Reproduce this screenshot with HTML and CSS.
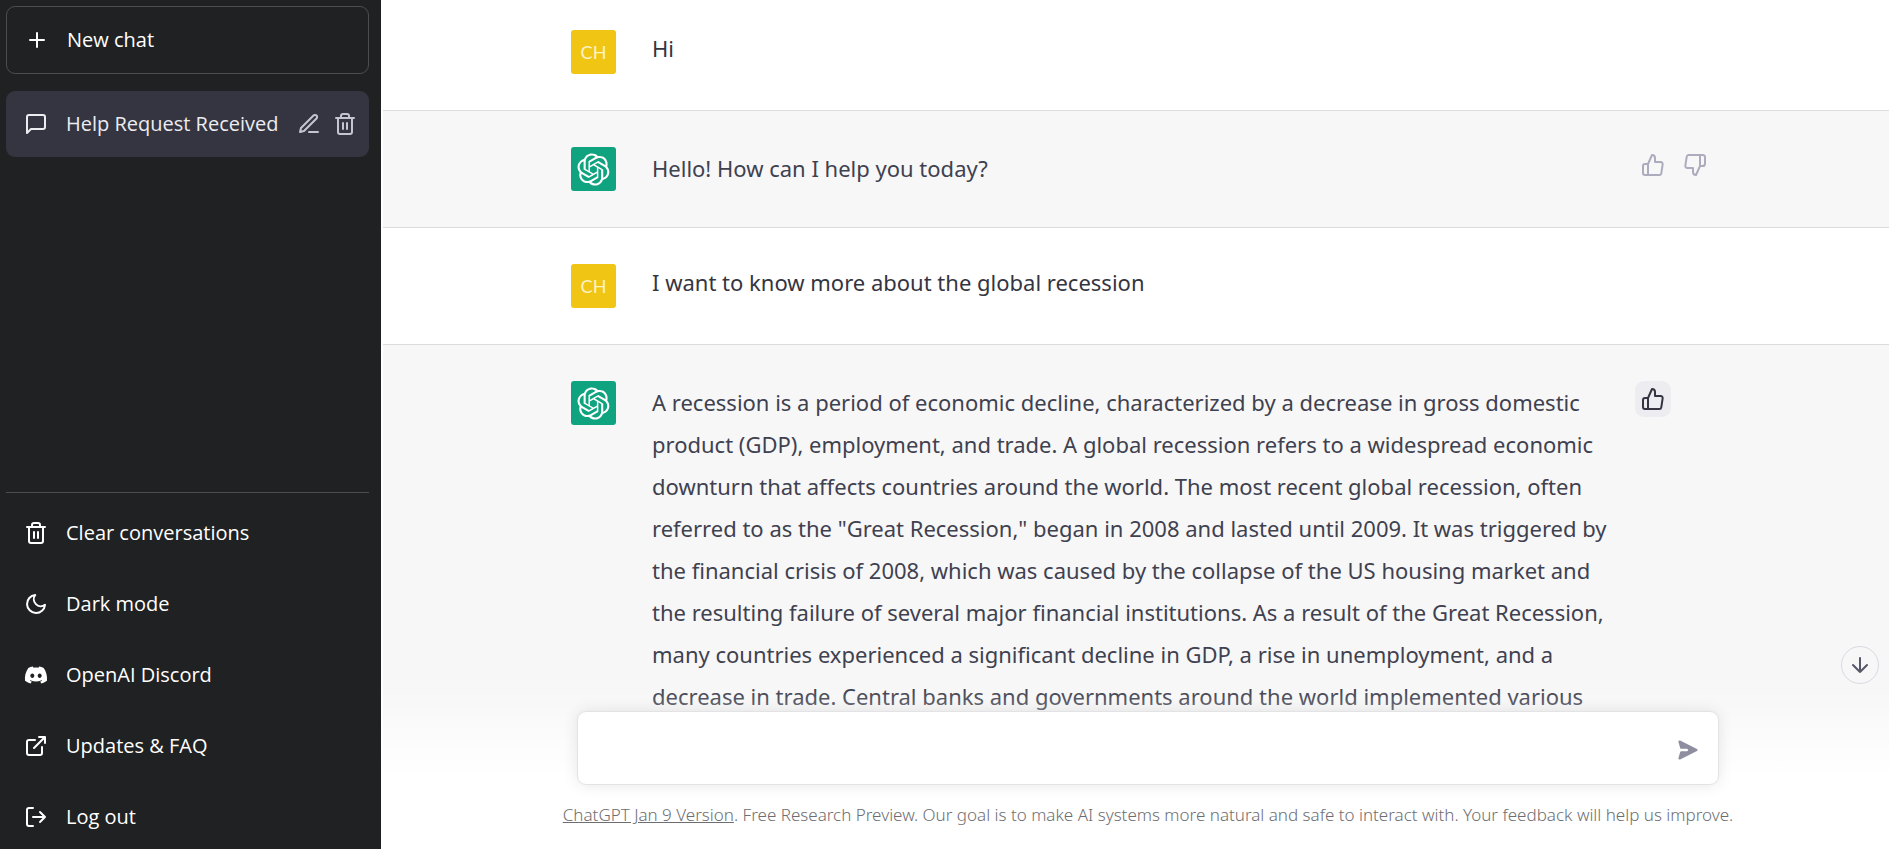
FILE: index.html
```html
<!DOCTYPE html>
<html lang="en">
<head>
    <meta charset="UTF-8">
    <meta name="viewport" content="width=device-width, initial-scale=1">
    <title>Help Request Received</title>
    <link rel="stylesheet" href="styles.css">
</head>
<body>
    <!-- shared icons -->
    <svg class="icon_defs" aria-hidden="true">
        <symbol id="icon-trash" viewBox="0 0 24 24">
            <path d="M3 6h18M19 6v14a2 2 0 0 1-2 2H7a2 2 0 0 1-2-2V6m3 0V4a2 2 0 0 1 2-2h4a2 2 0 0 1 2 2v2M10 11v6M14 11v6"/>
        </symbol>
        <symbol id="icon-thumb-up" viewBox="0 0 24 24">
            <path d="M14 9V5a3 3 0 0 0-3-3l-4 9v11h11.28a2 2 0 0 0 2-1.7l1.38-9a2 2 0 0 0-2-2.3zM7 22H4a2 2 0 0 1-2-2v-7a2 2 0 0 1 2-2h3"/>
        </symbol>
        <symbol id="icon-thumb-down" viewBox="0 0 24 24">
            <path d="M10 15v4a3 3 0 0 0 3 3l4-9V2H5.72a2 2 0 0 0-2 1.7l-1.38 9a2 2 0 0 0 2 2.3zm7-13h2.67A2.31 2.31 0 0 1 22 4v7a2.31 2.31 0 0 1-2.33 2H17"/>
        </symbol>
        <symbol id="icon-openai" viewBox="0 0 41 41">
            <path d="M37.5324 16.8707C37.9808 15.5241 38.1363 14.0974 37.9886 12.6859C37.8409 11.2744 37.3934 9.91076 36.676 8.68622C35.6126 6.83404 33.9882 5.3676 32.0373 4.4985C30.0864 3.62941 27.9098 3.40259 25.8215 3.85078C24.8796 2.7893 23.7219 1.94125 22.4257 1.36341C21.1295 0.785575 19.7249 0.491269 18.3058 0.500197C16.1708 0.495044 14.0893 1.16803 12.3614 2.42214C10.6335 3.67624 9.34853 5.44666 8.6917 7.47815C7.30085 7.76286 5.98686 8.3414 4.8377 9.17505C3.68854 10.0087 2.73073 11.0782 2.02839 12.312C0.956464 14.1591 0.498905 16.2988 0.721698 18.4228C0.944492 20.5467 1.83612 22.5449 3.268 24.1293C2.81966 25.4759 2.66413 26.9026 2.81182 28.3141C2.95951 29.7256 3.40701 31.0892 4.12437 32.3138C5.18791 34.1659 6.8123 35.6322 8.76321 36.5013C10.7141 37.3704 12.8907 37.5973 14.9789 37.1492C15.9208 38.2107 17.0786 39.0587 18.3747 39.6366C19.6709 40.2144 21.0755 40.5087 22.4946 40.4998C24.6307 40.5054 26.7133 39.8321 28.4418 38.5772C30.1704 37.3223 31.4556 35.5506 32.1119 33.5179C33.5027 33.2332 34.8167 32.6547 35.9659 31.821C37.115 30.9874 38.0728 29.9178 38.7752 28.684C39.8458 26.8371 40.3023 24.6979 40.0789 22.5748C39.8556 20.4517 38.9639 18.4544 37.5324 16.8707ZM22.4978 37.8849C20.7443 37.8874 19.0459 37.2733 17.6994 36.1501C17.7601 36.117 17.8666 36.0586 17.936 36.0161L25.9004 31.4156C26.1003 31.3019 26.2663 31.137 26.3813 30.9378C26.4964 30.7386 26.5563 30.5124 26.5549 30.2825V19.0542L29.9213 20.998C29.9389 21.0068 29.9541 21.0198 29.9656 21.0359C29.977 21.052 29.9842 21.0707 29.9867 21.0902V30.3889C29.9842 32.375 29.1946 34.2791 27.7909 35.6841C26.3872 37.0892 24.4838 37.8806 22.4978 37.8849ZM6.39227 31.0064C5.51397 29.4888 5.19742 27.7107 5.49804 25.9832C5.55718 26.0187 5.66048 26.0818 5.73461 26.1244L13.699 30.7248C13.8975 30.8408 14.1233 30.902 14.3532 30.902C14.583 30.902 14.8088 30.8408 15.0073 30.7248L24.731 25.1103V28.9979C24.7321 29.0177 24.7283 29.0376 24.7199 29.0556C24.7115 29.0736 24.6988 29.0893 24.6829 29.1012L16.6317 33.7497C14.9096 34.7416 12.8643 35.0097 10.9447 34.4954C9.02506 33.9811 7.38785 32.7263 6.39227 31.0064ZM4.29707 13.6194C5.17156 12.0998 6.55279 10.9364 8.19885 10.3327C8.19885 10.4013 8.19491 10.5228 8.19491 10.6071V19.808C8.19351 20.0378 8.25334 20.2638 8.36823 20.4629C8.48312 20.6619 8.64893 20.8267 8.84863 20.9404L18.5723 26.5542L15.206 28.4979C15.1894 28.5089 15.1703 28.5155 15.1505 28.5173C15.1307 28.5191 15.1107 28.516 15.0924 28.5082L7.04046 23.8557C5.32135 22.8601 4.06716 21.2235 3.55289 19.3046C3.03862 17.3858 3.30624 15.3413 4.29707 13.6194ZM31.955 20.0556L22.2312 14.4411L25.5976 12.4981C25.6142 12.4872 25.6333 12.4805 25.6531 12.4787C25.6729 12.4769 25.6928 12.4801 25.7111 12.4879L33.7631 17.1364C34.9967 17.849 36.0017 18.8982 36.6606 20.1613C37.3194 21.4244 37.6047 22.849 37.4832 24.2684C37.3617 25.6878 36.8382 27.0432 35.9743 28.1759C35.1103 29.3086 33.9415 30.1717 32.6047 30.6641C32.6047 30.5947 32.6047 30.4733 32.6047 30.3889V21.188C32.6066 20.9586 32.5474 20.7328 32.4332 20.5338C32.319 20.3348 32.154 20.1698 31.955 20.0556ZM35.3055 15.0128C35.2464 14.9765 35.1431 14.9142 35.069 14.8717L27.1045 10.2712C26.906 10.1554 26.6803 10.0943 26.4504 10.0943C26.2206 10.0943 25.9948 10.1554 25.7963 10.2712L16.0726 15.8858V11.9982C16.0715 11.9783 16.0753 11.9585 16.0837 11.9405C16.0921 11.9225 16.1048 11.9068 16.1207 11.8949L24.1719 7.25025C25.4053 6.53903 26.8158 6.19376 28.2383 6.25482C29.6608 6.31589 31.0364 6.78077 32.2044 7.59508C33.3723 8.40939 34.2842 9.53945 34.8334 10.8531C35.3826 12.1667 35.5464 13.6095 35.3055 15.0128ZM14.2424 21.9419L10.8752 19.9981C10.8576 19.9893 10.8423 19.9763 10.8309 19.9602C10.8195 19.9441 10.8122 19.9254 10.8098 19.9058V10.6071C10.8107 9.18295 11.2173 7.78848 11.9819 6.58696C12.7466 5.38544 13.8377 4.42659 15.1275 3.82264C16.4173 3.21869 17.8524 2.99464 19.2649 3.1767C20.6775 3.35876 22.0089 3.93941 23.1034 4.85067C23.0427 4.88379 22.937 4.94215 22.8668 4.98473L14.9024 9.58517C14.7025 9.69878 14.5366 9.86356 14.4215 10.0626C14.3065 10.2616 14.2466 10.4877 14.2479 10.7175L14.2424 21.9419ZM16.071 17.9991L20.4018 15.4978L24.7325 17.9975V22.9985L20.4018 25.4983L16.071 22.9985V17.9991Z"/>
        </symbol>
    </svg>

    <div class="app">
        <aside class="sidebar">
            <button type="button" class="new_chat">
                <svg class="icon" viewBox="0 0 24 24"><path d="M12 5v14M5 12h14"/></svg>
                <span>New chat</span>
            </button>
            <div class="chat_item">
                <a class="chat_link" href="#">
                    <svg class="icon" viewBox="0 0 24 24"><path d="M21 15a2 2 0 0 1-2 2H7l-4 4V5a2 2 0 0 1 2-2h14a2 2 0 0 1 2 2z"/></svg>
                    <span>Help Request Received</span>
                </a>
                <button type="button" class="chat_action" aria-label="Rename">
                    <svg class="icon" viewBox="0 0 24 24"><path d="M12 20h9M16.5 3.5a2.121 2.121 0 0 1 3 3L7 19l-4 1 1-4L16.5 3.5z"/></svg>
                </button>
                <button type="button" class="chat_action" aria-label="Delete">
                    <svg class="icon"><use href="#icon-trash"/></svg>
                </button>
            </div>
            <nav class="menu">
                <a href="#">
                    <svg class="icon"><use href="#icon-trash"/></svg>
                    <span>Clear conversations</span>
                </a>
                <a href="#">
                    <svg class="icon" viewBox="0 0 24 24"><path d="M21 12.79A9 9 0 1 1 11.21 3 7 7 0 0 0 21 12.79z"/></svg>
                    <span>Dark mode</span>
                </a>
                <a href="#">
                    <svg class="icon icon_fill" viewBox="-1 -1 26 26"><path d="M20.317 4.3698a19.7913 19.7913 0 00-4.8851-1.5152.0741.0741 0 00-.0785.0371c-.211.3753-.4447.8648-.6083 1.2495-1.8447-.2762-3.68-.2762-5.4868 0-.1636-.3933-.4058-.8742-.6177-1.2495a.077.077 0 00-.0785-.037 19.7363 19.7363 0 00-4.8852 1.515.0699.0699 0 00-.0321.0277C.5334 9.0458-.319 13.5799.0992 18.0578a.0824.0824 0 00.0312.0561c2.0528 1.5076 4.0413 2.4228 5.9929 3.0294a.0777.0777 0 00.0842-.0276c.4616-.6304.8731-1.2952 1.226-1.9942a.076.076 0 00-.0416-.1057c-.6528-.2476-1.2743-.5495-1.8722-.8923a.077.077 0 01-.0076-.1277c.1258-.0943.2517-.1923.3718-.2914a.0743.0743 0 01.0776-.0105c3.9278 1.7933 8.18 1.7933 12.0614 0a.0739.0739 0 01.0785.0095c.1202.099.246.1981.3728.2924a.077.077 0 01-.0066.1276 12.2986 12.2986 0 01-1.873.8914.0766.0766 0 00-.0407.1067c.3604.698.7719 1.3628 1.225 1.9932a.076.076 0 00.0842.0286c1.961-.6067 3.9495-1.5219 6.0023-3.0294a.077.077 0 00.0313-.0552c.5004-5.177-.8382-9.6739-3.5485-13.6604a.061.061 0 00-.0312-.0286zM8.02 15.3312c-1.1825 0-2.1569-1.0857-2.1569-2.419 0-1.3332.9555-2.4189 2.157-2.4189 1.2108 0 2.1757 1.0952 2.1568 2.419 0 1.3332-.9555 2.4189-2.1569 2.4189zm7.9748 0c-1.1825 0-2.1569-1.0857-2.1569-2.419 0-1.3332.9554-2.4189 2.1569-2.4189 1.2108 0 2.1757 1.0952 2.1568 2.419 0 1.3332-.946 2.4189-2.1568 2.4189Z"/></svg>
                    <span>OpenAI Discord</span>
                </a>
                <a href="#">
                    <svg class="icon" viewBox="0 0 24 24"><path d="M18 13v6a2 2 0 0 1-2 2H5a2 2 0 0 1-2-2V8a2 2 0 0 1 2-2h6M15 3h6v6M10 14L21 3"/></svg>
                    <span>Updates &amp; FAQ</span>
                </a>
                <a href="#">
                    <svg class="icon" viewBox="0 0 24 24"><path d="M9 21H5a2 2 0 0 1-2-2V5a2 2 0 0 1 2-2h4M16 17l5-5-5-5M21 12H9"/></svg>
                    <span>Log out</span>
                </a>
            </nav>
        </aside>

        <main class="main">
            <div class="messages">
                <div class="message user">
                    <div class="message_inner">
                        <div class="avatar">CH</div>
                        <p class="text">Hi</p>
                    </div>
                </div>
                <div class="message bot">
                    <div class="message_inner">
                        <div class="avatar"><svg class="logo"><use href="#icon-openai"/></svg></div>
                        <p class="text">Hello! How can I help you today?</p>
                        <div class="feedback">
                            <button type="button" aria-label="Good answer"><svg class="icon"><use href="#icon-thumb-up"/></svg></button>
                            <button type="button" aria-label="Bad answer"><svg class="icon"><use href="#icon-thumb-down"/></svg></button>
                        </div>
                    </div>
                </div>
                <div class="message user">
                    <div class="message_inner">
                        <div class="avatar">CH</div>
                        <p class="text">I want to know more about the global recession</p>
                    </div>
                </div>
                <div class="message bot">
                    <div class="message_inner">
                        <div class="avatar"><svg class="logo"><use href="#icon-openai"/></svg></div>
                        <p class="text">A recession is a period of economic decline, characterized by a decrease in gross domestic product (GDP), employment, and trade. A global recession refers to a widespread economic downturn that affects countries around the world. The most recent global recession, often referred to as the "Great Recession," began in 2008 and lasted until 2009. It was triggered by the financial crisis of 2008, which was caused by the collapse of the US housing market and the resulting failure of several major financial institutions. As a result of the Great Recession, many countries experienced a significant decline in GDP, a rise in unemployment, and a decrease in trade. Central banks and governments around the world implemented various</p>
                        <div class="feedback">
                            <button type="button" class="active" aria-label="Good answer"><svg class="icon"><use href="#icon-thumb-up"/></svg></button>
                        </div>
                    </div>
                </div>
            </div>

            <button type="button" class="scroll_down" aria-label="Scroll to bottom">
                <svg class="icon" viewBox="0 0 24 24"><path d="M12 5v14M19 12l-7 7-7-7"/></svg>
            </button>

            <div class="bottom">
                <form class="composer">
                    <textarea rows="1" aria-label="Message"></textarea>
                    <button type="button" aria-label="Send">
                        <svg class="icon icon_fill icon_send" viewBox="0 0 20 20"><path d="M10.894 2.553a1 1 0 00-1.788 0l-7 14a1 1 0 001.169 1.409l5-1.429A1 1 0 009 15.571V11a1 1 0 112 0v4.571a1 1 0 00.725.962l5 1.428a1 1 0 001.17-1.408l-7-14z"/></svg>
                    </button>
                </form>
                <p class="note"><a href="#">ChatGPT Jan 9 Version</a>. Free Research Preview. Our goal is to make AI systems more natural and safe to interact with. Your feedback will help us improve.</p>
            </div>
        </main>
    </div>
</body>
</html>
```
FILE: styles.css
```css
* {
    box-sizing: border-box;
    margin: 0;
    padding: 0;
}
body {
    font-family: "Segoe UI", "Noto Sans", "Open Sans", sans-serif;
    color: #343541;
    background-color: #fff;
}
a {
    color: inherit;
    text-decoration: none;
}
button {
    font: inherit;
    color: inherit;
    background: none;
    border: none;
    cursor: pointer;
}
.icon_defs {
    display: none;
}
.icon {
    display: block;
    flex: none;
    width: 24px;
    height: 24px;
    fill: none;
    stroke: currentColor;
    stroke-width: 2;
    stroke-linecap: round;
    stroke-linejoin: round;
}
.icon_fill {
    fill: currentColor;
    stroke: none;
}
.app {
    display: flex;
    height: 100vh;
    overflow: hidden;
}

/* sidebar */
.sidebar {
    display: flex;
    flex: none;
    flex-direction: column;
    width: 381px;
    padding: 6px 12px 0 6px;
    font-family: "Segoe UI", "Open Sans", sans-serif;
    font-size: 20px;
    line-height: 30px;
    color: #fff;
    background-color: #202122;
}
.new_chat {
    display: flex;
    align-items: center;
    gap: 18px;
    padding: 18px;
    border: 1px solid #4d4d4f;
    border-radius: 9px;
}
.chat_item {
    display: flex;
    align-items: center;
    gap: 12px;
    margin-top: 17px;
    padding: 18px 12px 18px 18px;
    color: #ececf1;
    background-color: #343541;
    border-radius: 9px;
}
.chat_link {
    display: flex;
    flex: 1;
    align-items: center;
    gap: 18px;
    min-width: 0;
    white-space: nowrap;
}
.chat_action {
    color: #c5c5d2;
}
.menu {
    display: flex;
    flex-direction: column;
    gap: 6px;
    margin-top: auto;
    padding-top: 7px;
    border-top: 1px solid #4d4d4f;
}
.menu a {
    display: flex;
    align-items: center;
    gap: 18px;
    height: 65px;
    padding: 0 18px;
}

/* conversation */
.main {
    position: relative;
    flex: 1;
    min-width: 0;
    overflow: hidden;
    border-left: 2px solid #fff;
}
.message {
    padding: 36px 0 36px 12px;
    border-bottom: 1px solid #dcdcde;
}
.message:first-child {
    padding-top: 30px;
}
/* room for the input area */
.message:last-child {
    padding-bottom: 180px;
}
.bot {
    background-color: #f7f7f8;
}
.message_inner {
    display: flex;
    align-items: flex-start;
    max-width: 1142px;
    margin: 0 auto;
}
.avatar {
    display: flex;
    flex: none;
    align-items: center;
    justify-content: center;
    width: 45px;
    height: 44px;
    margin-right: 36px;
    font-family: Lato, sans-serif;
    font-size: 18px;
    color: #fdf3c4;
    background-color: #f0c514;
    border-radius: 3px;
}
.bot .avatar {
    background-color: #10a37f;
}
.logo {
    width: 33px;
    height: 33px;
    fill: #fff;
}
.text {
    flex: 1;
    font-size: 22px;
    line-height: 36px;
}
.bot .text {
    line-height: 42px;
    color: #40414f;
}
.feedback {
    display: flex;
    gap: 6px;
    width: 78px;
    margin-left: 12px;
    color: #acacbe;
}
.feedback button {
    padding: 6px;
    border-radius: 9px;
}
.feedback .active {
    color: #343541;
    background-color: #ececf1;
}
.scroll_down {
    position: absolute;
    right: 10px;
    bottom: 165px;
    z-index: 2;
    padding: 6px;
    color: #565869;
    background-color: #f7f7f8;
    border: 1px solid #d9d9e3;
    border-radius: 50%;
}

/* input area */
.bottom {
    position: absolute;
    right: 0;
    bottom: 0;
    left: 0;
    padding: 36px 0 22px 24px;
    background-image: linear-gradient(rgba(255, 255, 255, 0) 8%, #fff 58%);
}
.composer {
    display: flex;
    align-items: center;
    max-width: 1142px;
    height: 74px;
    margin: 0 auto;
    padding: 4px 18px 0;
    background-color: #fff;
    border: 1px solid #e3e3e6;
    border-radius: 9px;
    box-shadow: 0 0 15px rgba(0, 0, 0, 0.1);
}
.composer textarea {
    flex: 1;
    height: 36px;
    font: inherit;
    font-size: 22px;
    line-height: 36px;
    border: none;
    outline: none;
    resize: none;
}
.composer button {
    color: #8e8ea0;
}
.icon_send {
    transform: rotate(90deg);
}
.note {
    margin-top: 18px;
    font-size: 17px;
    font-weight: 300;
    line-height: 24px;
    text-align: center;
    color: #6e6e72;
}
.note a {
    text-decoration: underline;
}
```
